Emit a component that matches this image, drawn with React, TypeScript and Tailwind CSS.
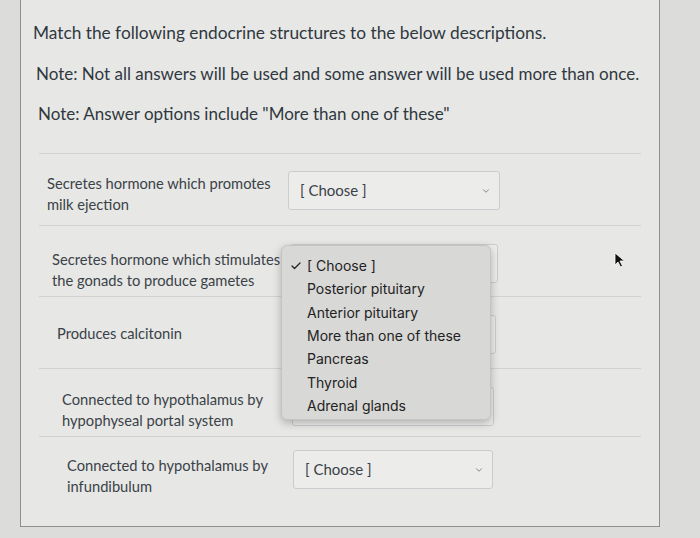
import { ChevronDown, Check } from 'lucide-react';

const rows = [
  { label: ['Secretes hormone which promotes', 'milk ejection'], pad: 'pl-[8px]', selPad: 'ml-[0px]', w: 'w-[212px]', h: 'h-[72px]', top: 'pt-[17px]', lt: 'pt-[2px]' },
  { label: ['Secretes hormone which stimulates', 'the gonads to produce gametes'], pad: 'pl-[13px]', selPad: 'ml-[2px]', w: 'w-[208px]', h: 'h-[71px]', top: 'pt-[18px]', lt: 'pt-[5px]' },
  { label: ['Produces calcitonin'], pad: 'pl-[18px]', selPad: 'ml-[2px]', w: 'w-[206px]', h: 'h-[72px]', top: 'pt-[18px]', lt: 'pt-[8px]' },
  { label: ['Connected to hypothalamus by', 'hypophyseal portal system'], pad: 'pl-[23px]', selPad: 'ml-[4px]', w: 'w-[202px]', h: 'h-[68px]', top: 'pt-[18px]', lt: 'pt-[2px]' },
  { label: ['Connected to hypothalamus by', 'infundibulum'], pad: 'pl-[28px]', selPad: 'ml-[5px]', w: 'w-[200px]', h: 'h-[89px]', top: 'pt-[13px]', lt: 'pt-[5px]' },
];

const options = ['[ Choose ]', 'Posterior pituitary', 'Anterior pituitary', 'More than one of these', 'Pancreas', 'Thyroid', 'Adrenal glands'];

function SelectBox({ hidden, w }: { hidden?: boolean; w: string }) {
  return (
    <div className={`${w} h-[39px] border border-[#c9cdd0] rounded-[3px] bg-[#ececea] flex items-center justify-between pl-[11px] pr-[8px]`}>
      <span className="text-[15px] text-[#3b4248]">{hidden ? '' : '[ Choose ]'}</span>
      <ChevronDown className="w-[10px] h-[10px] text-[#6b7378]" strokeWidth={2} />
    </div>
  );
}

export default function App() {
  return (
    <div className="relative w-[700px] h-[538px] bg-[#dcdcda] overflow-hidden font-['Lato',sans-serif] text-[#2f3840]">
      <div className="ml-[20px] w-[640px] h-[527px] bg-[#e7e7e5] border-l border-r border-b border-[#8e8e8c]">
        <div className="pl-[12px] pt-[22px]">
          <p className="text-[17.3px] leading-[22px]">Match the following endocrine structures to the below descriptions.</p>
          <p className="text-[17px] leading-[22px] mt-[19px] pl-[3px]">Note: Not all answers will be used and some answer will be used more than once.</p>
          <p className="text-[17px] leading-[22px] mt-[18px] pl-[5px]">Note: Answer options include "More than one of these"</p>
        </div>
        <div className="mx-[18px] mt-[28px] border-t border-[#cfd2d3]" />
        {rows.map((r, i) => (
          <div key={i} className={`${r.h} ${r.top} mx-[18px] ${i < 4 ? 'border-b border-[#cfd2d3]' : ''} flex items-start`}>
            <div className={`${r.pad} ${r.lt} w-[249px] shrink-0 text-[14.7px] leading-[21px] text-[#3a4248]`}>
              {r.label.map((l, j) => (
                <div key={j} className="whitespace-nowrap">{l}</div>
              ))}
            </div>
            <div className={r.selPad}>
              {/* rows 2-4 sit under the open menu */}
              <SelectBox hidden={i >= 1 && i <= 3} w={r.w} />
            </div>
          </div>
        ))}
      </div>

      {/* open dropdown menu */}
      <div className="absolute left-[281px] top-[245px] w-[210px] h-[175px] bg-[#d8d8d6] rounded-[6px] shadow-[0_3px_8px_rgba(0,0,0,0.25)] border border-[#c4c4c2] pt-[8px] font-['Inter',sans-serif]">
        {options.map((o, i) => (
          <div key={o} className="h-[23.3px] flex items-center text-[14px] text-[#222]">
            <span className="w-[25px] flex justify-end pr-[5px]">
              {i === 0 && <Check className="w-[12px] h-[12px]" strokeWidth={2.5} />}
            </span>
            <span>{o}</span>
          </div>
        ))}
      </div>

      {/* mouse cursor */}
      <svg className="absolute left-[614px] top-[252px]" width="12" height="16" viewBox="0 0 12 16">
        <path d="M1 1 L1 13 L4 10 L6.5 15 L8.5 14 L6 9 L10.5 9 Z" fill="#111" stroke="#fff" strokeWidth="0.8" />
      </svg>
    </div>
  );
}
